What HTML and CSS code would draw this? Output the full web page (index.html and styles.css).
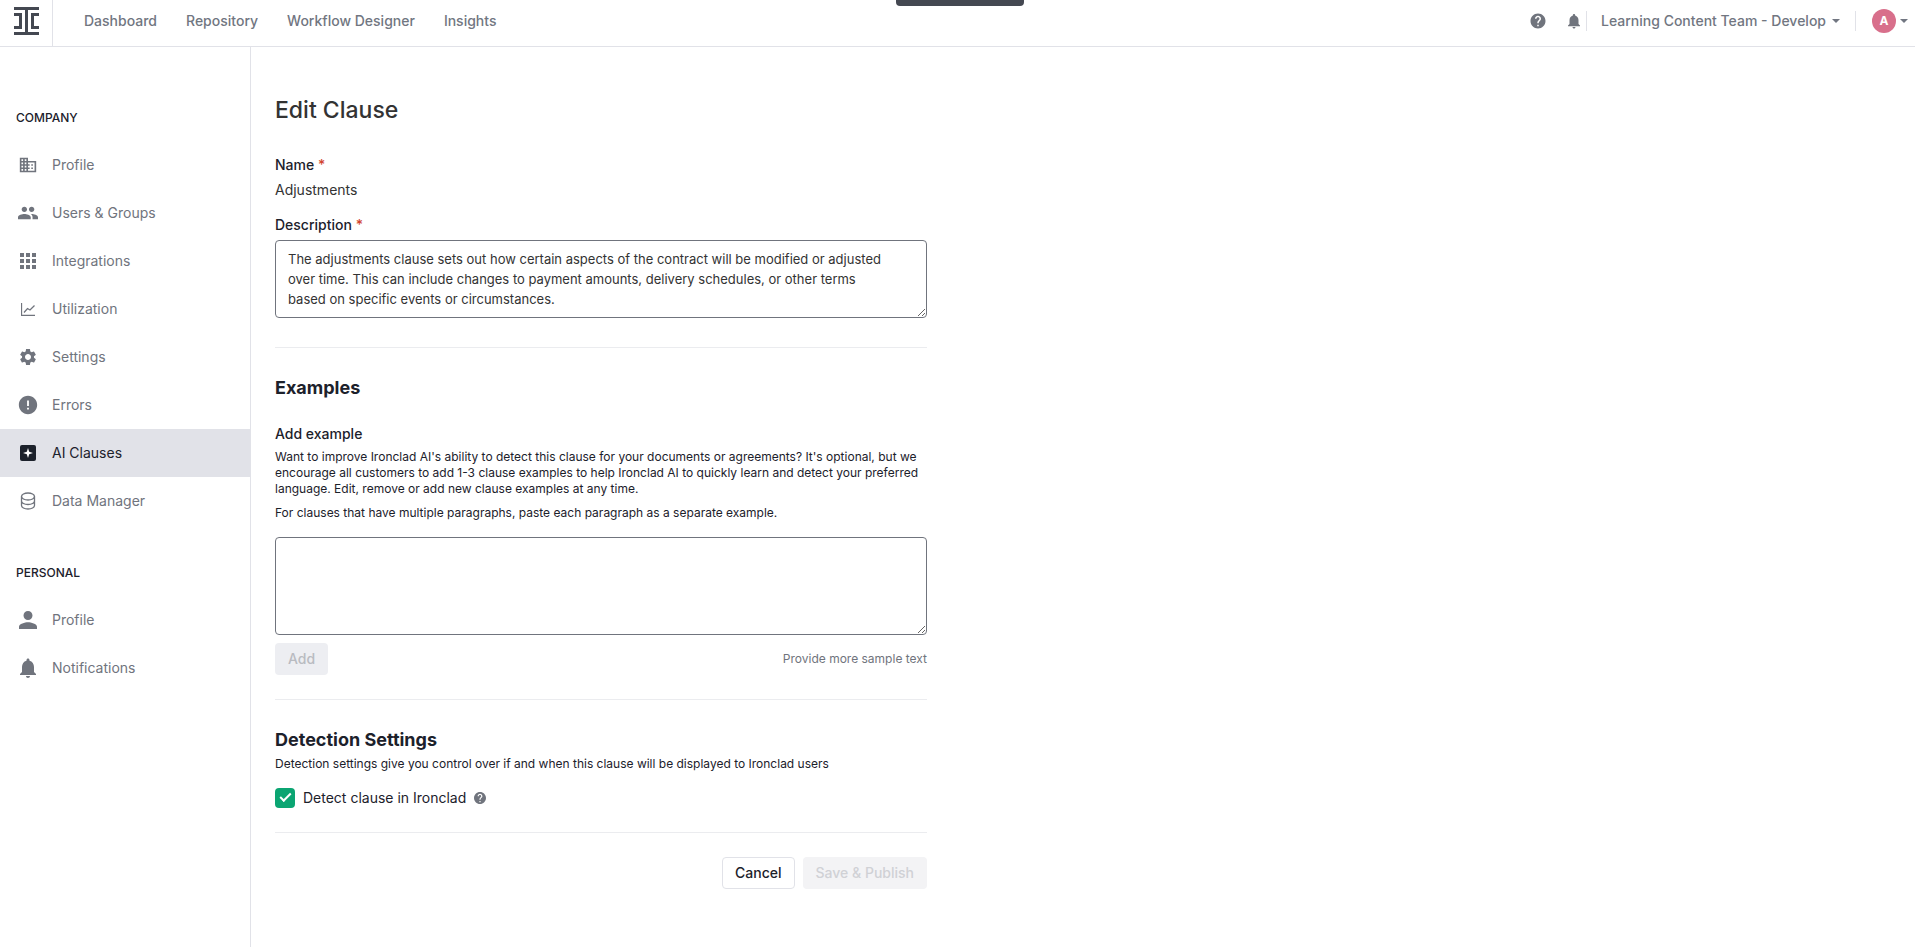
FILE: index.html
```html
<!DOCTYPE html>
<html lang="en">
<head>
  <meta charset="UTF-8" />
  <meta name="viewport" content="width=device-width, initial-scale=1" />
  <title>Edit Clause</title>
  <link rel="stylesheet" href="styles.css">
</head>
<body>

  <div class="top-tab"></div>

  <header class="topbar">
    <a href="#" class="logo" aria-label="Ironclad">
      <svg width="25" height="28" viewBox="0 0 25 28">
        <path d="M0 0h25v3H14v22h11v3H0v-3h11V3H0z" />
        <path d="M0 6h8v16H0v-3h5V9H0zM25 6h-8v16h8v-3h-5V9h5z" />
      </svg>
    </a>
    <nav class="main-nav">
      <a href="#">Dashboard</a>
      <a href="#">Repository</a>
      <a href="#">Workflow Designer</a>
      <a href="#">Insights</a>
    </nav>
    <div class="topbar-right">
      <button type="button" class="help-btn" aria-label="Help">
        <svg width="18" height="18" viewBox="0 0 24 24"><path d="M12 2C6.48 2 2 6.48 2 12s4.480 10 10 10 10-4.480 10-10S17.520 2 12 2zm1 17h-2v-2h2v2zm2.070-7.750-.9.920C13.450 12.900 13 13.500 13 15h-2v-.5c0-1.100.45-2.100 1.170-2.830l1.240-1.260c.370-.36.590-.86.590-1.410 0-1.100-.9-2-2-2s-2 .9-2 2H8c0-2.210 1.790-4 4-4s4 1.790 4 4c0 .88-.36 1.680-.93 2.250z" /></svg>
      </button>
      <button type="button" class="bell-btn" aria-label="Notifications">
        <svg width="18" height="18" viewBox="0 0 24 24"><path d="M12 22c1.100 0 2-.9 2-2h-4c0 1.100.89 2 2 2zm6-6v-5c0-3.070-1.640-5.640-4.500-6.320V4c0-.83-.67-1.500-1.500-1.500s-1.500.67-1.500 1.500v.68C7.630 5.360 6 7.920 6 11v5l-2 2v1h16v-1l-2-2z" /></svg>
      </button>
      <button type="button" class="team-btn">Learning Content Team - Develop <span class="caret"></span></button>
      <button type="button" class="user-btn" aria-label="Account"><span class="avatar">A</span><span class="caret"></span></button>
    </div>
  </header>

  <div class="layout">
    <aside class="sidebar">
      <h2 class="side-title">Company</h2>
      <ul class="side-list">
        <li><a href="#">
          <svg width="18" height="18" viewBox="1 2 22 20"><path d="M12 7V3H2v18h20V7H12zM6 19H4v-2h2v2zm0-4H4v-2h2v2zm0-4H4V9h2v2zm0-4H4V5h2v2zm4 12H8v-2h2v2zm0-4H8v-2h2v2zm0-4H8V9h2v2zm0-4H8V5h2v2zm10 12h-8v-2h2v-2h-2v-2h2v-2h-2V9h8v10zm-2-8h-2v2h2v-2zm0 4h-2v2h2v-2z" /></svg>
          Profile</a></li>
        <li><a href="#">
          <svg width="20" height="20" viewBox="1 1 22 22"><path d="M16 11c1.660 0 2.990-1.340 2.990-3S17.660 5 16 5s-3 1.340-3 3 1.340 3 3 3zm-8 0c1.660 0 2.990-1.340 2.990-3S9.660 5 8 5 5 6.340 5 8s1.340 3 3 3zm0 2c-2.330 0-7 1.170-7 3.500V19h14v-2.500c0-2.330-4.670-3.500-7-3.500zm8 0c-.29 0-.62.020-.97.050 1.160.84 1.970 1.970 1.970 3.450V19h6v-2.500c0-2.330-4.670-3.500-7-3.500z" /></svg>
          Users &amp; Groups</a></li>
        <li><a href="#">
          <svg width="16" height="16" viewBox="0 0 16 16"><path d="M0 0h4v4H0zM6 0h4v4H6zM12 0h4v4h-4zM0 6h4v4H0zM6 6h4v4H6zM12 6h4v4h-4zM0 12h4v4H0zM6 12h4v4H6zM12 12h4v4h-4z" /></svg>
          Integrations</a></li>
        <li><a href="#">
          <svg width="14" height="14" viewBox="0 0 14 14"><path class="line" d="M.5 1v12.500H14M3 10.500l3.500-4 2.500 1.500 4.500-4.500" /></svg>
          Utilization</a></li>
        <li><a href="#">
          <svg width="20" height="20" viewBox="0 0 24 24"><path d="M19.140 12.940c.040-.3.060-.61.060-.94 0-.32-.020-.64-.070-.94l2.030-1.580c.18-.14.23-.41.120-.61l-1.920-3.320c-.12-.22-.37-.29-.59-.22l-2.390.96c-.5-.38-1.030-.7-1.620-.94l-.36-2.540c-.04-.24-.24-.41-.48-.41h-3.840c-.24 0-.43.17-.47.41l-.36 2.540c-.59.24-1.130.57-1.620.94l-2.390-.96c-.22-.08-.47 0-.59.22L2.740 8.870c-.12.210-.08.470.12.610l2.030 1.580c-.05.3-.09.630-.09.940s.02.640.07.940l-2.030 1.580c-.18.14-.23.41-.12.610l1.920 3.320c.12.220.37.290.59.220l2.390-.96c.5.380 1.030.7 1.620.940l.36 2.540c.05.240.24.410.48.410h3.840c.24 0 .44-.17.470-.41l.36-2.540c.59-.24 1.130-.56 1.620-.94l2.390.96c.22.080.47 0 .59-.22l1.920-3.320c.12-.22.070-.47-.12-.61l-2.010-1.580zM12 15.600c-1.980 0-3.600-1.620-3.600-3.600s1.620-3.600 3.600-3.600 3.600 1.620 3.600 3.600-1.620 3.600-3.600 3.600z" /></svg>
          Settings</a></li>
        <li><a href="#">
          <svg width="22" height="22" viewBox="0 0 24 24"><path d="M12 2C6.480 2 2 6.480 2 12s4.480 10 10 10 10-4.480 10-10S17.520 2 12 2zm1 15h-2v-2h2v2zm0-4h-2V7h2v6z" /></svg>
          Errors</a></li>
        <li><a href="#" class="active">
          <svg width="16" height="16" viewBox="0 0 16 16"><rect width="16" height="16" rx="2" /><path class="spark" d="M8 3l1.200 3.800L13 8 9.200 9.200 8 13 6.800 9.200 3 8l3.800-1.200z" /></svg>
          AI Clauses</a></li>
        <li><a href="#">
          <svg width="16" height="18" viewBox="0 0 16 18"><g class="line"><ellipse cx="8" cy="4.500" rx="6.500" ry="3.500" /><path d="M1.500 4.500v9c0 1.900 2.900 3.500 6.500 3.500s6.500-1.600 6.500-3.500v-9M1.500 9c0 1.900 2.900 3.500 6.500 3.500s6.500-1.600 6.500-3.500" /></g></svg>
          Data Manager</a></li>
      </ul>

      <h2 class="side-title">Personal</h2>
      <ul class="side-list">
        <li><a href="#">
          <svg width="18" height="18" viewBox="4 4 16 16"><path d="M12 12c2.210 0 4-1.790 4-4s-1.790-4-4-4-4 1.790-4 4 1.790 4 4 4zm0 2c-2.670 0-8 1.340-8 4v2h16v-2c0-2.660-5.330-4-8-4z" /></svg>
          Profile</a></li>
        <li><a href="#">
          <svg width="24" height="24" viewBox="0 0 24 24"><path d="M12 22c1.100 0 2-.9 2-2h-4c0 1.100.89 2 2 2zm6-6v-5c0-3.070-1.640-5.640-4.500-6.320V4c0-.83-.67-1.500-1.500-1.500s-1.500.67-1.500 1.500v.68C7.630 5.360 6 7.920 6 11v5l-2 2v1h16v-1l-2-2z" /></svg>
          Notifications</a></li>
      </ul>
    </aside>

    <main class="content">
      <form class="clause-form">
        <h1>Edit Clause</h1>

        <div class="label">Name <span class="required">*</span></div>
        <p class="name-value">Adjustments</p>

        <label class="label" for="description">Description <span class="required">*</span></label>
        <textarea id="description" class="text-area" rows="3">The adjustments clause sets out how certain aspects of the contract will be modified or adjusted over time. This can include changes to payment amounts, delivery schedules, or other terms based on specific events or circumstances.</textarea>

        <section class="section">
          <h2 class="examples-title">Examples</h2>
          <label class="label" for="example">Add example</label>
          <p class="hint">Want to improve Ironclad AI's ability to detect this clause for your documents or agreements? It's optional, but we encourage all customers to add 1-3 clause examples to help Ironclad AI to quickly learn and detect your preferred language. Edit, remove or add new clause examples at any time.</p>
          <p class="hint">For clauses that have multiple paragraphs, paste each paragraph as a separate example.</p>
          <textarea id="example" class="text-area example-area" rows="4"></textarea>
          <div class="add-row">
            <button type="button" class="btn btn-add" disabled>Add</button>
            <span class="add-note">Provide more sample text</span>
          </div>
        </section>

        <section class="section detection">
          <h2>Detection Settings</h2>
          <p class="hint">Detection settings give you control over if and when this clause will be displayed to Ironclad users</p>
          <div class="check-row">
            <input type="checkbox" id="detect" checked>
            <label for="detect">Detect clause in Ironclad</label>
            <svg width="12" height="12" viewBox="2 2 20 20"><path d="M12 2C6.480 2 2 6.480 2 12s4.480 10 10 10 10-4.480 10-10S17.520 2 12 2zm1 17h-2v-2h2v2zm2.070-7.750-.9.920C13.450 12.900 13 13.500 13 15h-2v-.5c0-1.100.45-2.100 1.170-2.830l1.240-1.260c.370-.36.590-.86.590-1.410 0-1.100-.9-2-2-2s-2 .9-2 2H8c0-2.210 1.790-4 4-4s4 1.790 4 4c0 .88-.36 1.680-.93 2.250z" /></svg>
          </div>
        </section>

        <div class="section form-actions">
          <button type="button" class="btn btn-cancel">Cancel</button>
          <button type="submit" class="btn btn-save" disabled>Save &amp; Publish</button>
        </div>
      </form>
    </main>
  </div>

</body>
</html>
```

FILE: styles.css
```css
*,
*::before,
*::after {
  box-sizing: border-box;
}

body {
  margin: 0;
  min-height: 100vh;
  display: flex;
  flex-direction: column;
  font-family: Inter, "Liberation Sans", sans-serif;
  font-size: 14px;
  line-height: 20px;
  color: #1c212b;
  background: #fff;
}

h1, h2, p, ul {
  margin: 0;
  padding: 0;
}

a {
  color: inherit;
  text-decoration: none;
}

button {
  font: inherit;
  cursor: pointer;
}

svg {
  display: block;
  flex: none;
  fill: #70747d;
}

.line {
  fill: none;
  stroke: #70747d;
  stroke-width: 1.3;
}

/* dark handle hanging over the top edge */
.top-tab {
  position: absolute;
  top: 0;
  left: calc(50% - 62px);
  width: 128px;
  height: 6px;
  background: #444851;
  border-radius: 0 0 4px 4px;
}

/* Top bar */
.topbar {
  display: flex;
  height: 47px;
  border-bottom: 1px solid #e1e2e8;
  color: #717681;
  font-weight: 500;
}

.logo {
  padding: 7px 13px 0 14px;
  border-right: 1px solid #e1e2e8;
}

.logo svg {
  fill: #444851;
}

.main-nav {
  display: flex;
  gap: 29px;
  padding: 11px 0 0 31px;
}

.topbar-right {
  display: flex;
  align-items: center;
  height: 42px;
  margin-left: auto;
  padding-right: 7px;
}

.topbar-right button {
  display: flex;
  align-items: center;
  border: 0;
  padding: 0;
  background: none;
  color: inherit;
}

.topbar-right .help-btn {
  margin-right: 18px;
}

.topbar-right .bell-btn {
  height: 20px;
  padding-right: 3px;
  border-right: 1px solid #e1e2e8;
}

.topbar-right .team-btn {
  gap: 6px;
  height: 20px;
  padding: 0 15px 0 14px;
  border-right: 1px solid #e1e2e8;
}

.topbar-right .user-btn {
  gap: 4px;
  padding-left: 16px;
}

.caret {
  border: 4px solid transparent;
  border-top-color: #717681;
  border-bottom: 0;
}

.avatar {
  width: 24px;
  height: 24px;
  border-radius: 50%;
  background: #d86f8b;
  color: #fff;
  font-size: 12px;
  font-weight: 700;
  line-height: 24px;
}

/* Sidebar */
.layout {
  display: flex;
  flex: 1;
}

.sidebar {
  width: 251px;
  flex: none;
  padding-top: 23px;
  border-right: 1px solid #e1e2e8;
}

.side-title {
  margin: 40px 16px 15px;
  font-size: 12px;
  font-weight: 500;
  line-height: 16px;
  text-transform: uppercase;
}

.side-list {
  list-style: none;
}

.side-list a {
  display: grid;
  grid-template-columns: 24px 1fr;
  gap: 12px;
  align-items: center;
  height: 48px;
  padding: 0 16px;
  color: #70747d;
}

.side-list svg {
  justify-self: center;
}

.side-list .active {
  background: #e1e2e8;
  color: #1c212b;
}

.side-list .active svg {
  fill: #1c212b;
}

.side-list .spark {
  fill: #fff;
}

/* Form */
.content {
  flex: 1;
  padding: 47px 24px 24px;
}

.clause-form {
  max-width: 652px;
}

h1 {
  margin-bottom: 29px;
  color: #333;
  font-size: 23px;
  font-weight: 500;
  line-height: 32px;
}

.clause-form h2 {
  font-size: 18px;
  font-weight: 700;
  line-height: 24px;
}

.label {
  display: block;
  font-weight: 500;
}

.required {
  color: #d1442f;
}

.name-value {
  margin: 5px 0 15px;
  color: #333;
}

.text-area {
  display: block;
  width: 100%;
  margin-top: 5px;
  padding: 8px 36px 8px 12px;
  border: 1px solid #70747d;
  border-radius: 4px;
  background: #fff;
  color: #333;
  font: inherit;
  font-size: 13px;
  line-height: 20px;
}

.section {
  margin-top: 29px;
  padding-top: 28px;
  border-top: 1px solid #ebecef;
}

.clause-form .examples-title {
  margin-bottom: 24px;
}

.hint {
  margin-top: 5px;
  font-size: 12px;
  line-height: 16px;
}

.hint + .hint {
  margin-top: 8px;
}

.example-area {
  margin-top: 16px;
}

.add-row {
  display: flex;
  align-items: center;
  justify-content: space-between;
  margin-top: 8px;
}

.add-note {
  color: #70747d;
  font-size: 12px;
}

.btn {
  height: 32px;
  padding: 0 12px;
  border: 1px solid transparent;
  border-radius: 4px;
  font-weight: 500;
}

.btn-add {
  background: #edeef2;
  color: #b9bbc1;
}

.btn-cancel {
  border-color: #e1e2e8;
  background: #fff;
  color: #1c212b;
}

.btn-save {
  background: #f3f3f5;
  color: #d0d1d5;
}

.detection {
  margin-top: 24px;
}

.detection .hint {
  margin-top: 4px;
}

.check-row {
  display: flex;
  align-items: center;
  gap: 8px;
  margin-top: 16px;
}

.check-row input {
  display: grid;
  place-items: center;
  appearance: none;
  width: 20px;
  height: 20px;
  margin: 0;
  border-radius: 4px;
}

.check-row input:not(:checked) {
  border: 1px solid #70747d;
}

.check-row input:checked {
  background: #0ba572;
}

.check-row input:checked::after {
  content: "";
  width: 11px;
  height: 6px;
  margin-bottom: 4px;
  border: 2px solid #fff;
  border-top: 0;
  border-right: 0;
  transform: rotate(-45deg);
}

.form-actions {
  display: flex;
  justify-content: flex-end;
  gap: 8px;
  margin-top: 24px;
  padding-top: 24px;
}
```
